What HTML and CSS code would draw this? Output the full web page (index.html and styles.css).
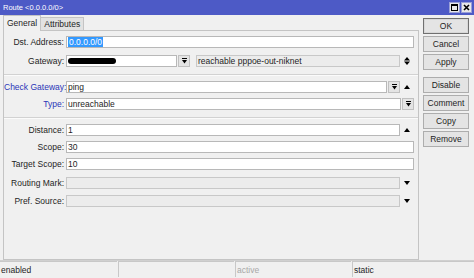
FILE: index.html
```html
<!DOCTYPE html>
<html>
<head>
    <title>Route</title>
    <link rel="stylesheet" href="styles.css">
</head>
<body>
<div class="window">
    <div class="titlebar">
        <span class="title">Route &lt;0.0.0.0/0&gt;</span>
        <div class="wbtns">
            <span class="wbtn"><svg width="7" height="7" viewBox="0 0 7 7"><rect x="0.5" y="0.5" width="6" height="6" fill="none" stroke="#000"/><line x1="0" y1="1.5" x2="7" y2="1.5" stroke="#000"/></svg></span>
            <span class="wbtn"><svg width="7" height="7" viewBox="0 0 7 7"><path d="M1 1L6 6M6 1L1 6" stroke="#000" stroke-width="1.6"/></svg></span>
        </div>
    </div>

    <div class="main">
        <div class="left">
            <div class="tabs">
                <div class="tab active">General</div>
                <div class="tab">Attributes</div>
            </div>
            <div class="panel">
                <div class="row">
                    <label>Dst. Address:</label>
                    <div class="input"><span class="sel">0.0.0.0/0</span></div>
                </div>
                <div class="row gap2">
                    <label>Gateway:</label>
                    <div class="input gw"><span class="blob"></span></div>
                    <span class="dd"><svg width="5" height="6" viewBox="0 0 5 6"><line x1="0" y1="0.5" x2="5" y2="0.5" stroke="#000"/><path d="M0 2H5L2.5 5.5Z" fill="#000"/></svg></span>
                    <div class="input ro">reachable pppoe-out-niknet</div>
                    <span class="arrow"><svg width="6" height="8" viewBox="0 0 6 8"><path d="M0 3.5H6L3 0Z M0 4.5H6L3 8Z" fill="#000"/></svg></span>
                </div>
                <div class="sep"></div>
                <div class="row">
                    <label class="blue">Check Gateway:</label>
                    <div class="input">ping</div>
                    <span class="dd"><svg width="5" height="6" viewBox="0 0 5 6"><line x1="0" y1="0.5" x2="5" y2="0.5" stroke="#000"/><path d="M0 2H5L2.5 5.5Z" fill="#000"/></svg></span>
                    <span class="arrow"><svg width="6" height="4" viewBox="0 0 6 4"><path d="M0 4H6L3 0Z" fill="#000"/></svg></span>
                </div>
                <div class="row">
                    <label class="blue">Type:</label>
                    <div class="input">unreachable</div>
                    <span class="dd"><svg width="5" height="6" viewBox="0 0 5 6"><line x1="0" y1="0.5" x2="5" y2="0.5" stroke="#000"/><path d="M0 2H5L2.5 5.5Z" fill="#000"/></svg></span>
                </div>
                <div class="sep"></div>
                <div class="row">
                    <label>Distance:</label>
                    <div class="input">1</div>
                    <span class="arrow"><svg width="6" height="4" viewBox="0 0 6 4"><path d="M0 4H6L3 0Z" fill="#000"/></svg></span>
                </div>
                <div class="row">
                    <label>Scope:</label>
                    <div class="input">30</div>
                </div>
                <div class="row">
                    <label>Target Scope:</label>
                    <div class="input">10</div>
                </div>
                <div class="row gap2">
                    <label>Routing Mark:</label>
                    <div class="input off"></div>
                    <span class="arrow"><svg width="6" height="4" viewBox="0 0 6 4"><path d="M0 0H6L3 4Z" fill="#000"/></svg></span>
                </div>
                <div class="row gap1">
                    <label>Pref. Source:</label>
                    <div class="input off"></div>
                    <span class="arrow"><svg width="6" height="4" viewBox="0 0 6 4"><path d="M0 0H6L3 4Z" fill="#000"/></svg></span>
                </div>
            </div>
        </div>

        <div class="buttons">
            <button class="default">OK</button>
            <button>Cancel</button>
            <button>Apply</button>
            <button class="group">Disable</button>
            <button>Comment</button>
            <button>Copy</button>
            <button>Remove</button>
        </div>
    </div>

    <div class="statusbar">
        <div class="cell c1">enabled</div>
        <div class="cell c2"></div>
        <div class="cell c3 dim">active</div>
        <div class="cell c4">static</div>
    </div>
</div>
</body>
</html>
```

FILE: styles.css
```css
body {
    margin: 0;
    background: #f0f0f0;
    font-family: "Liberation Sans", Arial, sans-serif;
    font-size: 8.5px;
    color: #1e1e1e;
}
.window {
    width: 474px;
    height: 278px;
    display: flex;
    flex-direction: column;
    overflow: hidden;
}
.titlebar {
    height: 15px;
    background: #4d5ac6;
    color: #fff;
    display: flex;
    align-items: center;
    justify-content: space-between;
    padding: 0 2px 0 3px;
}
.title {
    font-size: 7.5px;
}
.wbtns {
    display: flex;
    gap: 1px;
}
.wbtn {
    width: 9px;
    height: 9px;
    background: #e8e8e8;
    border: 1px solid #9aa0d8;
    display: flex;
    align-items: center;
    justify-content: center;
}
.main {
    display: flex;
    height: 246px;
}
.left {
    margin-left: 3px;
    width: 416px;
    display: flex;
    flex-direction: column;
}
.tabs {
    display: flex;
    height: 16px;
    align-items: flex-end;
}
.tab {
    height: 13px;
    line-height: 13px;
    padding: 0 3px;
    background: #e2e2e2;
    border: 1px solid #c4c4c4;
    border-bottom: none;
}
.tab.active {
    height: 15px;
    line-height: 15px;
    background: #f0f0f0;
    margin-right: -1px;
    position: relative;
    z-index: 1;
}
.panel {
    flex: 1;
    border: 1px solid #c4c4c4;
    margin-top: -1px;
    padding: 5px 4px 0 0;
    display: flex;
    flex-direction: column;
    gap: 5px;
}
.row {
    display: flex;
    align-items: center;
    height: 12px;
}
.row.gap2 { margin-top: 2px; }
.row.gap1 { margin-top: 1px; }
.row label {
    width: 60px;
    margin-right: 2px;
    text-align: right;
    white-space: nowrap;
}
.row label.blue { color: #2a36b8; }
.input {
    flex: 1;
    height: 12px;
    box-sizing: border-box;
    background: #fff;
    border: 1px solid #b8b8b8;
    line-height: 10px;
    padding-left: 1px;
    white-space: nowrap;
    overflow: hidden;
}
.input.gw {
    flex: none;
    width: 111px;
    position: relative;
}
.input.ro {
    background: #ececec;
    border-color: #c8c8c8;
    margin-left: 6px;
}
.input.off {
    background: #ececec;
    border-color: #c8c8c8;
}
.sel {
    background: #3399ff;
    color: #fff;
    padding: 0 1px;
}
.blob {
    position: absolute;
    left: 1px;
    top: 2px;
    width: 48px;
    height: 6px;
    background: #000;
    border-radius: 3px;
}
.dd {
    width: 12px;
    height: 12px;
    box-sizing: border-box;
    margin-left: 1px;
    background: #e4e4e4;
    border: 1px solid #c0c0c0;
    display: flex;
    align-items: center;
    justify-content: center;
}
.arrow {
    width: 14px;
    display: flex;
    justify-content: center;
    align-items: center;
}
.sep {
    height: 0;
    border-top: 1px solid #d2d2d2;
    border-bottom: 1px solid #fbfbfb;
    margin: 2px -4px 0 0;
}
.buttons {
    margin-left: 4px;
    padding-top: 3px;
    width: 46px;
    display: flex;
    flex-direction: column;
    gap: 2px;
}
button {
    height: 16px;
    padding: 0;
    font-family: "Liberation Sans", Arial, sans-serif;
    font-size: 8.5px;
    color: #1e1e1e;
    background: #e4e4e4;
    border: 1px solid #adadad;
    border-radius: 0;
}
button.default {
    border: 1px solid #707070;
    box-shadow: inset 0 0 0 1px #d8d8d8;
}
button.group {
    margin-top: 5px;
}
.statusbar {
    height: 17px;
    display: flex;
    border-top: 1px solid #d0d0d0;
}
.cell {
    height: 16px;
    line-height: 16px;
    box-sizing: border-box;
    border-left: 1px solid #c8c8c8;
    border-top: 1px solid #c8c8c8;
    padding-left: 1px;
}
.c1 { width: 117px; border-left: none; }
.c2 { width: 116px; margin-left: 1px; }
.c3 { width: 116px; margin-left: 1px; }
.c4 { flex: 1; margin-left: 1px; }
.dim { color: #a8a8a8; }
```
